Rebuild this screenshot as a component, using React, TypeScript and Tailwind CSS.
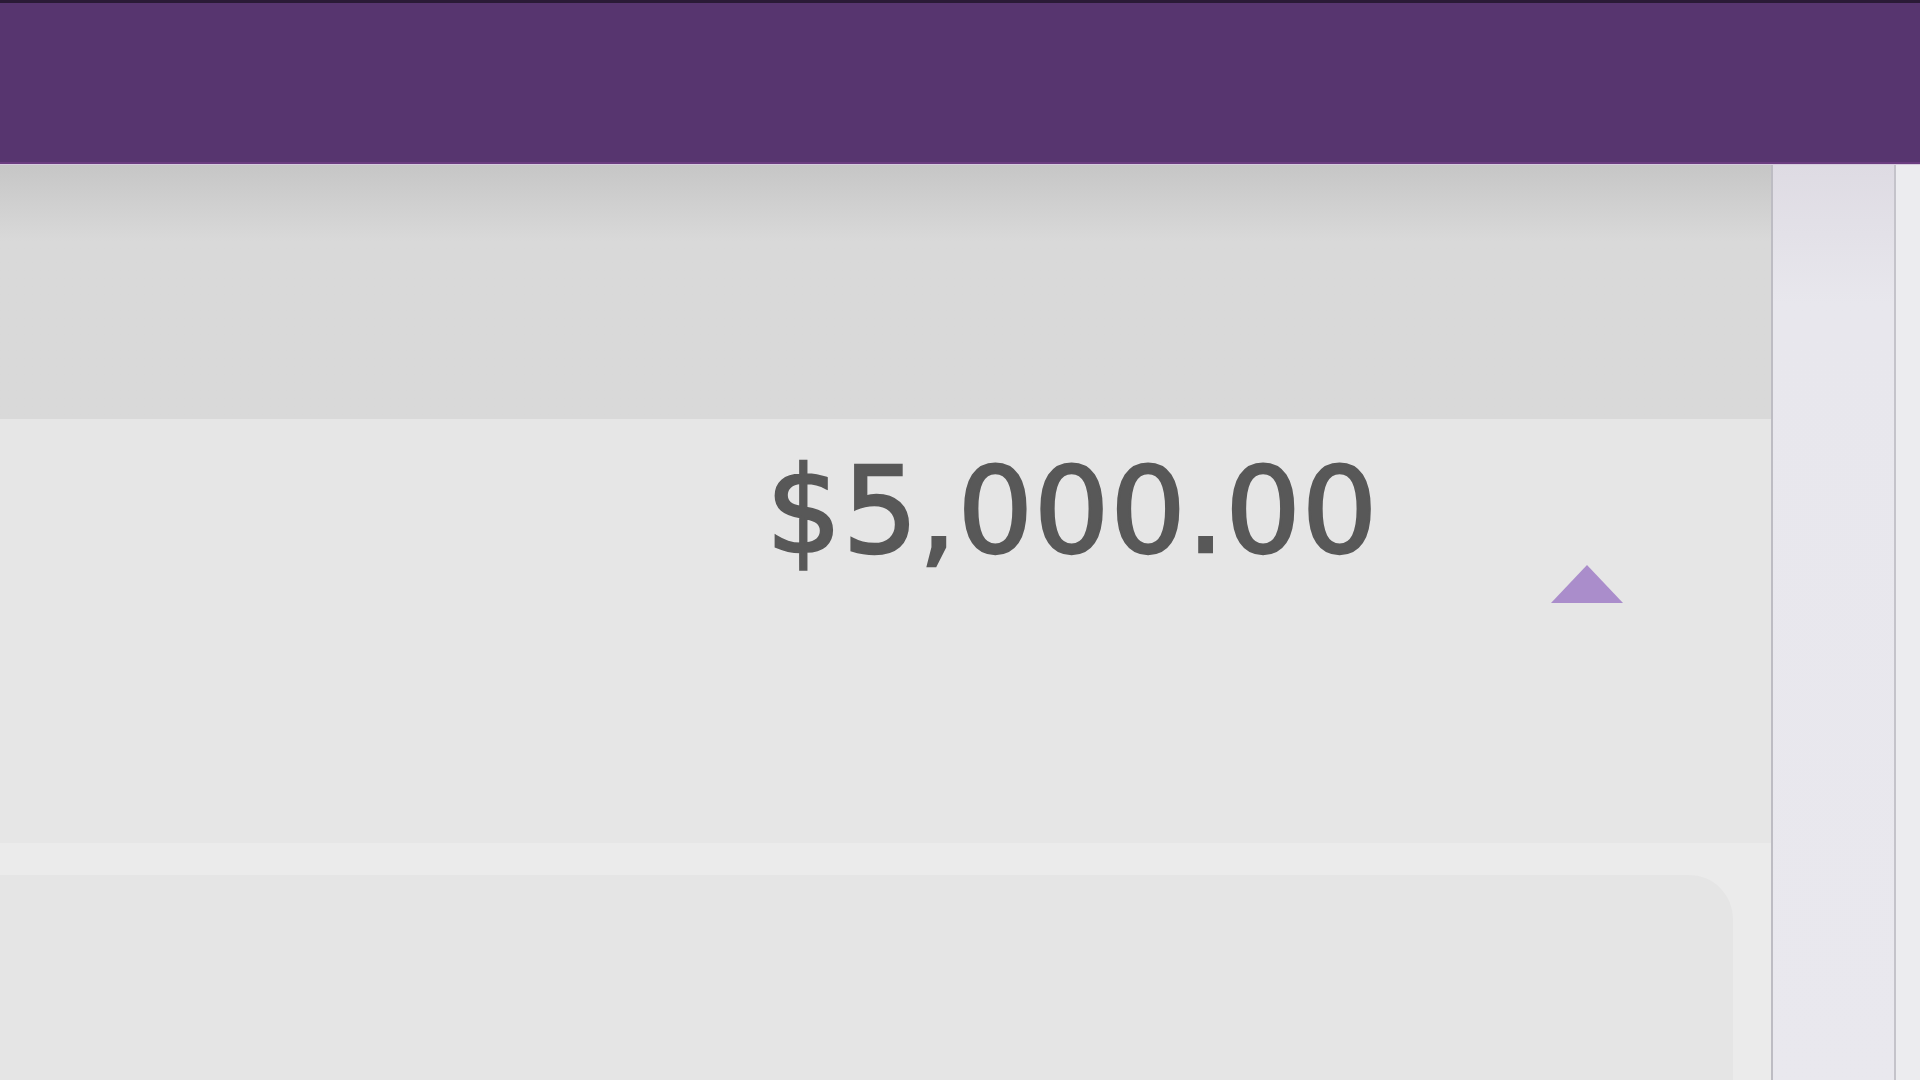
import React from 'react'

export default function App() {
  return (
    <div className="w-[1920px] h-[1080px] overflow-hidden flex flex-col bg-[#ebebeb]" style={{ fontFamily: '"DejaVu Sans", Lato, sans-serif' }}>
      {/* Top bar */}
      <div className="h-[164px] shrink-0 bg-[#57356f] border-t-[3px] border-[#2a1a36] border-b-2 border-b-[#6b3d80]" />

      <div className="flex flex-1 min-h-0 border-t border-[#d6cade]">
        {/* Main column */}
        <div className="w-[1771px] shrink-0 flex flex-col">
          {/* Header strip */}
          <div className="h-[254px] shrink-0 bg-gradient-to-b from-[#c6c6c6] via-[#d9d9d9] via-[30%] to-[#d9d9d9]" />

          {/* Amount row */}
          <div className="h-[424px] shrink-0 bg-[#e6e6e6] flex items-start">
            <div className="w-[766px] shrink-0" />
            <div className="pt-[33px] text-[119px] leading-none font-normal tracking-[0.006em] text-[#585858] [-webkit-text-stroke:2.5px_#585858]">
              $5,000.00
            </div>
            <div className="flex-1" />
            <div className="pt-[146px] pr-[148px]">
              <svg width="72" height="38" viewBox="0 0 72 38">
                <polygon points="36,0 72,38 0,38" fill="#aa8dcb" />
              </svg>
            </div>
          </div>

          {/* Bottom area */}
          <div className="flex-1 bg-[#ebebeb] pt-[32px]">
            <div className="w-[1733px] h-full bg-[#e5e5e5] rounded-tr-[44px]" />
          </div>
        </div>

        {/* Right panel */}
        <div className="w-[125px] shrink-0 bg-gradient-to-b from-[#dedbe3] via-[#e8e7ed] via-[15%] to-[#e9e8ee] border-l-2 border-[#bdbcc3] border-r-2 border-r-[#c4c3ca]" />
        <div className="flex-1 bg-[#ececef]" />
      </div>
    </div>
  )
}
